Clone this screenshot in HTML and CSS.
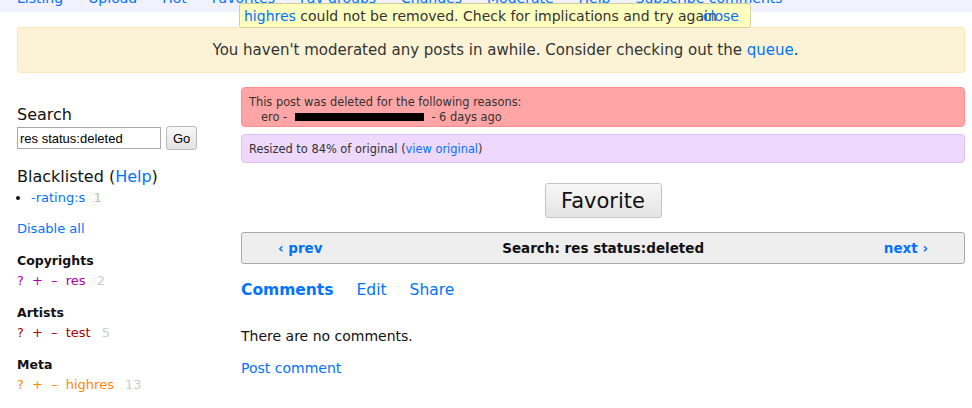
FILE: index.html
```html
<!DOCTYPE html>
<html lang="en">
<head>
    <meta charset="UTF-8">
    <title>res status:deleted</title>
    <link rel="stylesheet" href="styles.css">
</head>
<body>
    <div class="main-nav">
        <ul>
            <li><a href="#">Listing</a></li>
            <li><a href="#">Upload</a></li>
            <li><a href="#">Hot</a></li>
            <li><a href="#">Favorites</a></li>
            <li><a href="#">Fav groups</a></li>
            <li><a href="#">Changes</a></li>
            <li><a href="#">Moderate</a></li>
            <li><a href="#">Help</a></li>
            <li><a href="#">Subscribe comments</a></li>
        </ul>
    </div>

    <div class="popup-notice">
        <span><a href="#">highres</a> could not be removed. Check for implications and try again</span>
        <a href="#" class="close">close</a>
    </div>

    <div class="page">
        <div class="mod-notice">
            You haven't moderated any posts in awhile. Consider checking out the <a href="#">queue</a>.
        </div>

        <div class="columns">
            <div class="sidebar">
                <h2>Search</h2>
                <form class="search-form">
                    <input type="text" value="res status:deleted">
                    <button type="button">Go</button>
                </form>

                <h2 class="blacklist-title">Blacklisted (<a href="#">Help</a>)</h2>
                <ul class="blacklist">
                    <li><a href="#">-rating:s</a> <span class="count">1</span></li>
                </ul>
                <a href="#" class="disable-all">Disable all</a>

                <h3>Copyrights</h3>
                <div class="tag tag-copyright">
                    <span>?</span> <span>+</span> <span>&ndash;</span> <a href="#">res</a> <span class="count">2</span>
                </div>

                <h3>Artists</h3>
                <div class="tag tag-artist">
                    <span>?</span> <span>+</span> <span>&ndash;</span> <a href="#">test</a> <span class="count">5</span>
                </div>

                <h3>Meta</h3>
                <div class="tag tag-meta">
                    <span>?</span> <span>+</span> <span>&ndash;</span> <a href="#">highres</a> <span class="count">13</span>
                </div>
            </div>

            <div class="content">
                <div class="status deleted">
                    <div>This post was deleted for the following reasons:</div>
                    <div class="reason">ero - <span class="redacted"></span> - 6 days ago</div>
                </div>
                <div class="status resized">
                    Resized to 84% of original (<a href="#">view original</a>)
                </div>

                <div class="fav-row">
                    <button type="button" class="fav-button">Favorite</button>
                </div>

                <div class="search-seq">
                    <a href="#" class="prev">&lsaquo; prev</a>
                    <span class="seq-title">Search: res status:deleted</span>
                    <a href="#" class="next">next &rsaquo;</a>
                </div>

                <div class="tabs">
                    <a href="#" class="active">Comments</a>
                    <a href="#">Edit</a>
                    <a href="#">Share</a>
                </div>

                <p class="no-comments">There are no comments.</p>
                <a href="#" class="post-comment">Post comment</a>
            </div>
        </div>
    </div>
</body>
</html>
```

FILE: styles.css
```css
body {
    margin: 0;
    font-family: "DejaVu Sans", Verdana, sans-serif;
    font-size: 13px;
    color: #111;
    background: #fff;
}
a {
    color: #0073ff;
    text-decoration: none;
}
.main-nav {
    background: #f2f2ff;
    height: 12px;
    overflow: hidden;
}
.main-nav ul {
    list-style: none;
    margin: -10px 0 0 17px;
    padding: 0;
    display: flex;
    gap: 25px;
    font-size: 14px;
}
.popup-notice {
    position: absolute;
    left: 239px;
    top: 3px;
    width: 512px;
    height: 25px;
    box-sizing: border-box;
    background: #ffffbe;
    border: 1px solid #cfcf9f;
    border-radius: 3px;
    display: flex;
    align-items: center;
    padding-left: 4px;
    font-size: 14px;
    color: #333;
    white-space: nowrap;
    z-index: 2;
}
.popup-notice .close {
    margin-left: -14px;
}
.page {
    padding: 15px 7px 0 17px;
}
.mod-notice {
    background: #fcf3d6;
    border: 1px solid #f6e8b8;
    border-radius: 3px;
    line-height: 44px;
    padding-left: 29px;
    text-align: center;
    font-size: 15px;
    color: #333;
    white-space: nowrap;
}
.columns {
    display: flex;
}
.sidebar {
    width: 224px;
    flex-shrink: 0;
    padding-top: 32px;
}
.sidebar h2 {
    font-size: 16px;
    font-weight: normal;
    margin: 0 0 3px;
}
.search-form {
    display: flex;
    gap: 5px;
    margin: 0;
}
.search-form input {
    width: 144px;
    height: 22px;
    box-sizing: border-box;
    border: 1px solid #a9a9a9;
    padding: 1px 2px;
    font-family: "Liberation Sans", Arial, sans-serif;
    font-size: 13px;
    color: #000;
}
.search-form button {
    height: 24px;
    margin-top: -1px;
    padding: 0 6px;
    border: 1px solid #bbb;
    border-radius: 3px;
    background: linear-gradient(#f8f8f8, #e2e2e2);
    font-family: "Liberation Sans", Arial, sans-serif;
    font-size: 13px;
}
.sidebar .blacklist-title {
    margin-top: 17px;
}
.blacklist {
    margin: -2px 0 0;
    padding-left: 14px;
}
.blacklist li {
    line-height: 22px;
}
.count {
    color: #bbb;
    margin-left: 4px;
}
.disable-all {
    display: block;
    margin-top: 12px;
}
.sidebar h3 {
    font-size: 12.5px;
    margin: 17px 0 5px;
}
.tag span,
.tag a {
    margin-right: 4px;
}
.tag-copyright,
.tag-copyright a {
    color: #a0a;
}
.tag-artist,
.tag-artist a {
    color: #a00;
}
.tag-meta,
.tag-meta a {
    color: #f80;
}
.tag .count {
    color: #ccc;
    margin-left: 3px;
}
.content {
    flex: 1;
    padding-top: 14px;
}
.status {
    border-radius: 4px;
    font-size: 11.4px;
    line-height: 15px;
    margin-bottom: 7px;
    color: #333;
}
.deleted {
    background: #ffa5a5;
    border: 1px solid #ff8c8c;
    padding: 7px 7px 1px;
}
.reason {
    padding-left: 12px;
}
.redacted {
    display: inline-block;
    width: 129px;
    height: 8px;
    background: #000;
    margin: 0 4px;
}
.resized {
    background: #eed8fc;
    border: 1px solid #dfbff7;
    padding: 7px 7px 5px;
}
.fav-row {
    text-align: center;
    margin-top: 20px;
}
.fav-button {
    width: 117px;
    height: 35px;
    font-family: "DejaVu Sans", Verdana, sans-serif;
    font-size: 21px;
    padding: 0;
    border: 1px solid #c4c4c4;
    border-radius: 3px;
    background: linear-gradient(#f7f7f7, #e4e4e4);
    color: #111;
}
.search-seq {
    margin-top: 14px;
    height: 30px;
    background: #eee;
    border: 1px solid #aaa;
    border-radius: 3px;
    display: flex;
    align-items: center;
    justify-content: space-between;
    padding: 0 36px;
    font-weight: bold;
    font-size: 13.5px;
}
.tabs {
    margin-top: 17px;
    display: flex;
    gap: 23px;
    font-size: 15.5px;
}
.tabs .active {
    font-weight: bold;
}
.no-comments {
    margin: 29px 0 0;
    font-size: 14px;
}
.post-comment {
    display: block;
    margin-top: 16px;
    font-size: 14px;
}
```
